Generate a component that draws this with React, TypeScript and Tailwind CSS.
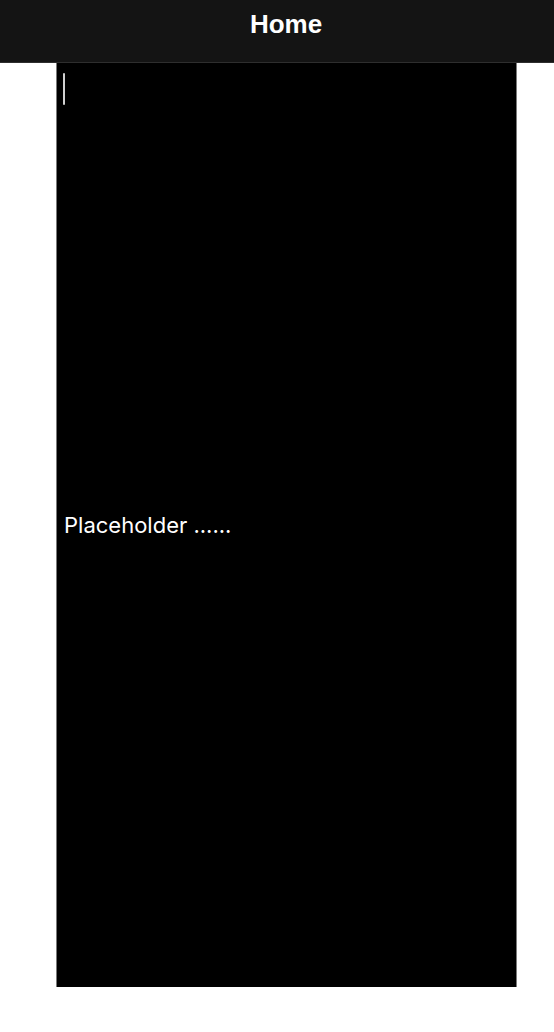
export default function App() {
  return (
    <div className="min-h-[1032px] bg-white" style={{ fontFamily: 'Inter, "Liberation Sans", sans-serif' }}>
      <header className="flex h-[63px] items-center justify-center border-b border-[#2e2e2e] bg-[#141414] pl-[18px]">
        <h1 className="-mt-[14px] text-[26px] font-bold text-white" style={{ fontFamily: '"Liberation Sans", Arial, sans-serif' }}>
          Home
        </h1>
      </header>
      <div className="ml-[56px] flex h-[924px] w-[461px] flex-col border-x border-[#7a7a7a] bg-black">
        <div className="ml-[6px] mt-[10px] h-[32px] w-[2px] rounded-full bg-[#d0d0d0]" />
        <div className="flex flex-1 items-center pb-[42px]">
          <span className="ml-[7px] text-[22px] text-white">Placeholder ......</span>
        </div>
      </div>
    </div>
  );
}
